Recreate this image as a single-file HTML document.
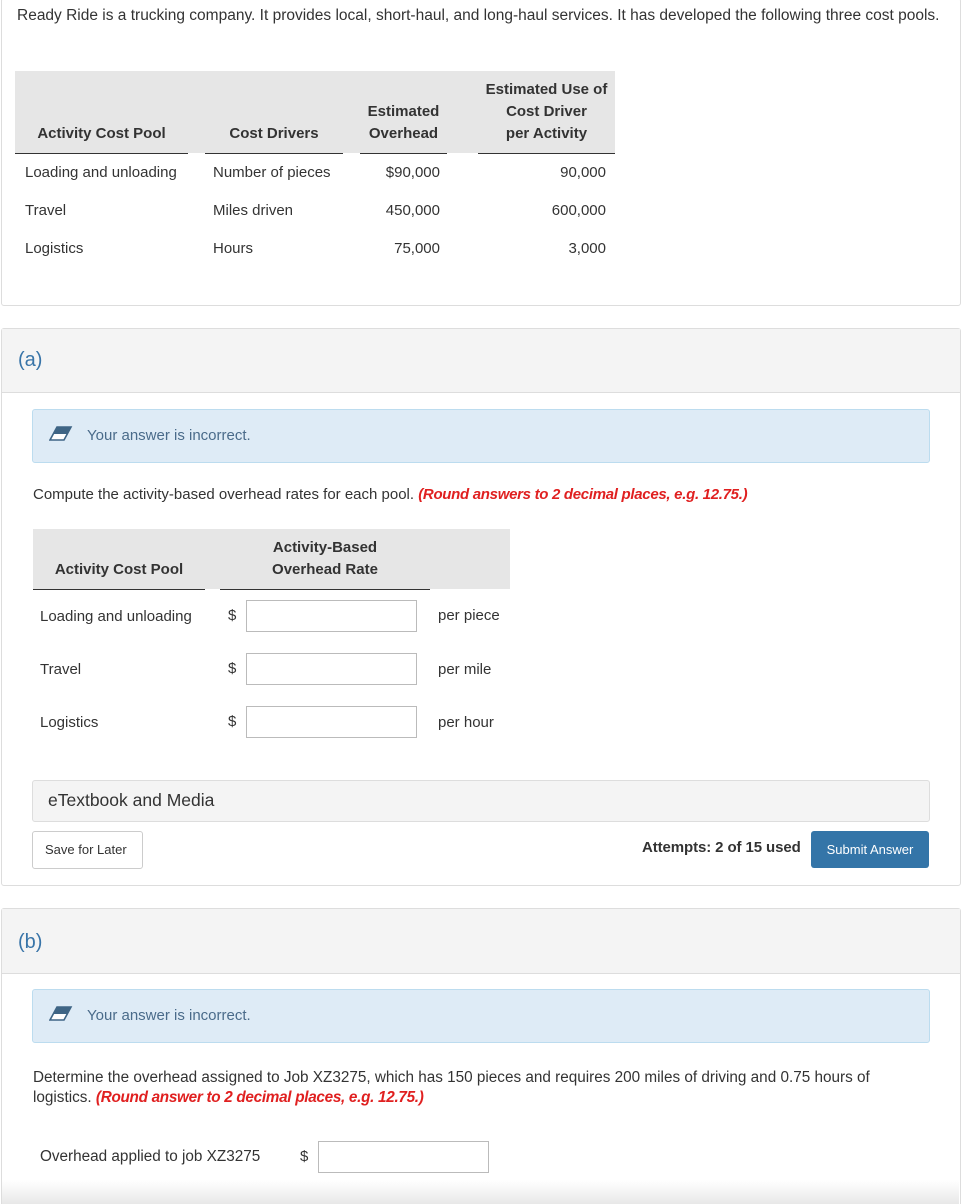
<!DOCTYPE html>
<html style="overflow:hidden;height:1204px"><head><meta charset="utf-8"><style>
body{margin:0;width:961px;height:1204px;position:relative;overflow:hidden;background:#fff;font-family:"Liberation Sans",sans-serif;font-size:15px;color:#333;}
.a{position:absolute;white-space:nowrap}
.panel{position:absolute;left:1px;width:958px;border:1px solid #ddd;border-radius:3px;background:#fff}
.hd{position:absolute;left:0;right:0;top:0;background:#f4f4f4;border-bottom:1px solid #ddd}
.lbl{position:absolute;left:16px;color:#3874a8;font-size:20px}
.th{font-weight:bold;color:#333;font-size:15px;line-height:22px}
.ul{position:absolute;height:1px;background:#333}
.alert{position:absolute;left:32px;width:896px;height:52px;background:#deebf6;border:1px solid #bcdcef;border-radius:3px}
.alert span{position:absolute;left:54px;top:17px;color:#4a6b8a;font-size:15px}
.inp{position:absolute;width:169px;height:30px;border:1px solid #bbb;background:#fff}
.red{color:#e02020;font-weight:bold;font-style:italic;letter-spacing:-0.3px}
</style></head><body>
<div class="panel" style="top:-2px;height:306px"></div>
<div class="a" style="left:17px;top:7px;font-size:15.5px">Ready Ride is a trucking company. It provides local, short-haul, and long-haul services. It has developed the following three cost pools.</div>
<div class="a" style="left:15px;top:71px;width:600px;height:82px;background:#e6e6e6"></div>
<div class="ul" style="left:15px;width:173px;top:153px"></div>
<div class="ul" style="left:205px;width:138px;top:153px"></div>
<div class="ul" style="left:360px;width:87px;top:153px"></div>
<div class="ul" style="left:478px;width:137px;top:153px"></div>
<div class="a th" style="left:15px;width:173px;text-align:center;top:123px">Activity Cost Pool</div>
<div class="a th" style="left:205px;width:138px;text-align:center;top:123px">Cost Drivers</div>
<div class="a th" style="left:360px;width:87px;top:101px;text-align:center">Estimated<br>Overhead</div>
<div class="a th" style="left:478px;width:137px;top:79px;text-align:center">Estimated Use of<br>Cost Driver<br>per Activity</div>
<div class="a" style="left:25px;top:164px">Loading and unloading</div>
<div class="a" style="left:213px;top:164px">Number of pieces</div>
<div class="a" style="left:360px;width:80px;text-align:right;top:164px">$90,000</div>
<div class="a" style="left:478px;width:128px;text-align:right;top:164px">90,000</div>
<div class="a" style="left:25px;top:202px">Travel</div>
<div class="a" style="left:213px;top:202px">Miles driven</div>
<div class="a" style="left:360px;width:80px;text-align:right;top:202px">450,000</div>
<div class="a" style="left:478px;width:128px;text-align:right;top:202px">600,000</div>
<div class="a" style="left:25px;top:240px">Logistics</div>
<div class="a" style="left:213px;top:240px">Hours</div>
<div class="a" style="left:360px;width:80px;text-align:right;top:240px">75,000</div>
<div class="a" style="left:478px;width:128px;text-align:right;top:240px">3,000</div>

<div class="panel" style="top:328px;height:556px"><div class="hd" style="height:63px"></div><div class="lbl" style="top:20px">(a)</div></div>
<div class="alert" style="top:409px"><svg style="position:absolute;left:16px;top:16px" width="24" height="16" viewBox="0 0 24 16"><path d="M8 1h14l-7 13H1z" fill="#fff" stroke="#3f6585" stroke-width="1.6"/><path d="M8 1h14l-4 7H4z" fill="#3f6585"/></svg><span>Your answer is incorrect.</span></div>
<div class="a" style="left:33px;top:486px;font-size:15px">Compute the activity-based overhead rates for each pool. <span class="red">(Round answers to 2 decimal places, e.g. 12.75.)</span></div>
<div class="a" style="left:33px;top:529px;width:477px;height:60px;background:#e6e6e6"></div>
<div class="ul" style="left:33px;width:172px;top:589px"></div>
<div class="ul" style="left:220px;width:210px;top:589px"></div>
<div class="a th" style="left:33px;width:172px;text-align:center;top:559px">Activity Cost Pool</div>
<div class="a th" style="left:220px;width:210px;text-align:center;top:537px">Activity-Based<br>Overhead Rate</div>
<div class="a" style="left:40px;top:608px">Loading and unloading</div>
<div class="a" style="left:228px;top:607px">$</div><div class="inp" style="left:246px;top:600px"></div><div class="a" style="left:438px;top:607px">per piece</div>
<div class="a" style="left:40px;top:661px">Travel</div>
<div class="a" style="left:228px;top:660px">$</div><div class="inp" style="left:246px;top:653px"></div><div class="a" style="left:438px;top:661px">per mile</div>
<div class="a" style="left:40px;top:714px">Logistics</div>
<div class="a" style="left:228px;top:713px">$</div><div class="inp" style="left:246px;top:706px"></div><div class="a" style="left:438px;top:714px">per hour</div>
<div class="a" style="left:32px;top:780px;width:896px;height:40px;background:#f4f4f4;border:1px solid #ddd;border-radius:3px"></div>
<div class="a" style="left:48px;top:790px;font-size:17.5px">eTextbook and Media</div>
<div class="a" style="left:32px;top:831px;width:109px;height:36px;border:1px solid #ccc;border-radius:3px;background:#fff"></div>
<div class="a" style="left:45px;top:842px;font-size:13px">Save for Later</div>
<div class="a" style="left:642px;top:839px;font-weight:bold;font-size:15px;letter-spacing:-0.1px">Attempts: 2 of 15 used</div>
<div class="a" style="left:811px;top:831px;width:118px;height:37px;background:#3475a8;border-radius:3px;color:#fff;font-size:13px;line-height:37px;text-align:center">Submit Answer</div>

<div class="panel" style="top:908px;height:300px"><div class="hd" style="height:64px"></div><div class="lbl" style="top:22px">(b)</div></div>
<div class="a" style="left:2px;top:1180px;width:957px;height:24px;background:linear-gradient(#fff,#e8e8e8)"></div>
<div class="alert" style="top:989px"><svg style="position:absolute;left:16px;top:16px" width="24" height="16" viewBox="0 0 24 16"><path d="M8 1h14l-7 13H1z" fill="#fff" stroke="#3f6585" stroke-width="1.6"/><path d="M8 1h14l-4 7H4z" fill="#3f6585"/></svg><span>Your answer is incorrect.</span></div>
<div class="a" style="left:33px;top:1068px;font-size:15.3px;line-height:20px">Determine the overhead assigned to Job XZ3275, which has 150 pieces and requires 200 miles of driving and 0.75 hours of<br>logistics. <span class="red">(Round answer to 2 decimal places, e.g. 12.75.)</span></div>
<div class="a" style="left:40px;top:1148px;font-size:15.3px">Overhead applied to job XZ3275</div>
<div class="a" style="left:300px;top:1148px">$</div>
<div class="inp" style="left:318px;top:1141px"></div>
</body></html>
